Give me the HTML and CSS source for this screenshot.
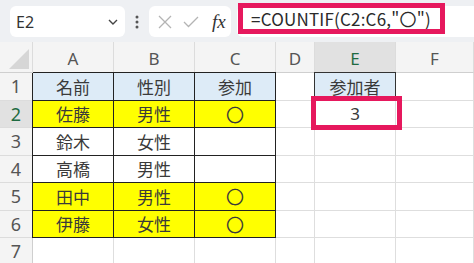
FILE: index.html
```html
<!DOCTYPE html>
<html lang="ja">
<head>
<meta charset="utf-8">
<link rel="stylesheet" href="styles.css">
</head>
<body>
<div class="topbar">
  <div class="namebox">
    <span class="name">E2</span>
    <svg class="chev" width="10" height="6" viewBox="0 0 10 6"><path d="M1 1l4 4 4-4" fill="none" stroke="#444" stroke-width="1.4"/></svg>
  </div>
  <svg class="dots" width="4" height="14" viewBox="0 0 4 14"><circle cx="2" cy="2" r="1.5" fill="#555"/><circle cx="2" cy="7" r="1.5" fill="#555"/><circle cx="2" cy="12" r="1.5" fill="#555"/></svg>
  <div class="fxbox">
    <svg width="14" height="14" viewBox="0 0 14 14"><path d="M1 1l12 12M13 1L1 13" stroke="#b4b4b4" stroke-width="1.3" fill="none"/></svg>
    <svg width="16" height="12" viewBox="0 0 16 12"><path d="M1 6l4.5 4.5L15 1" stroke="#b4b4b4" stroke-width="1.3" fill="none"/></svg>
    <span class="fx">fx</span>
  </div>
  <div class="formula">=COUNTIF(C2:C6,"〇")</div>
  <div class="mark mark-formula"></div>
</div>
<div class="sheet">
  <div class="ch corner"><span class="tri"></span></div>
  <div class="ch">A</div>
  <div class="ch">B</div>
  <div class="ch">C</div>
  <div class="ch">D</div>
  <div class="ch sel">E</div>
  <div class="ch">F</div>

  <div class="rh">1</div>
  <div class="c t hd l top">名前</div>
  <div class="c t hd top">性別</div>
  <div class="c t hd top">参加</div>
  <div class="c"></div>
  <div class="c e1">参加者</div>
  <div class="c"></div>

  <div class="rh sel">2</div>
  <div class="c t y l">佐藤</div>
  <div class="c t y">男性</div>
  <div class="c t y circ">〇</div>
  <div class="c"></div>
  <div class="c num">3</div>
  <div class="c"></div>

  <div class="rh">3</div>
  <div class="c t l">鈴木</div>
  <div class="c t">女性</div>
  <div class="c t"></div>
  <div class="c"></div>
  <div class="c"></div>
  <div class="c"></div>

  <div class="rh">4</div>
  <div class="c t l">高橋</div>
  <div class="c t">男性</div>
  <div class="c t"></div>
  <div class="c"></div>
  <div class="c"></div>
  <div class="c"></div>

  <div class="rh">5</div>
  <div class="c t y l">田中</div>
  <div class="c t y">男性</div>
  <div class="c t y circ">〇</div>
  <div class="c"></div>
  <div class="c"></div>
  <div class="c"></div>

  <div class="rh">6</div>
  <div class="c t y l">伊藤</div>
  <div class="c t y">女性</div>
  <div class="c t y circ">〇</div>
  <div class="c"></div>
  <div class="c"></div>
  <div class="c"></div>

  <div class="rh">7</div>
  <div class="c"></div>
  <div class="c"></div>
  <div class="c"></div>
  <div class="c"></div>
  <div class="c"></div>
  <div class="c"></div>

  <div class="mark mark-cell"></div>
</div>
</body>
</html>
```

FILE: styles.css
```css
html, body {
  margin: 0;
  padding: 0;
  background: #fff;
  overflow: hidden;
}
body {
  width: 474px;
  height: 263px;
  font-family: "Noto Sans CJK JP", "Noto Sans", sans-serif;
  color: #333;
}
.topbar {
  position: relative;
  height: 42px;
  background: #eef0f3;
  display: flex;
  align-items: flex-start;
  padding-top: 6px;
  box-sizing: border-box;
}
.namebox {
  margin-left: 10px;
  width: 115px;
  height: 31px;
  background: #fff;
  border-radius: 6px;
  display: flex;
  align-items: center;
  justify-content: space-between;
  padding: 0 7px 0 6px;
  box-sizing: border-box;
}
.name {
  font-size: 16px;
  color: #333;
  font-family: "Noto Sans", sans-serif;
}
.dots {
  margin: 9px 0 0 10px;
}
.fxbox {
  margin-left: 10px;
  width: 82px;
  height: 31px;
  background: #fff;
  border-radius: 6px;
  display: flex;
  align-items: center;
  gap: 11px;
  padding-left: 9px;
  box-sizing: border-box;
}
.fx {
  font-family: "Liberation Serif", "DejaVu Serif", serif;
  font-style: italic;
  font-size: 19px;
  color: #333;
  letter-spacing: 0;
  margin-left: 2px;
}
.formula {
  flex: 1;
  margin-left: 6px;
  height: 31px;
  background: #fff;
  border-radius: 6px 0 0 6px;
  font-size: 17px;
  line-height: 26px;
  padding-left: 14px;
  color: #2a2a2a;
  white-space: nowrap;
  letter-spacing: 0.2px;
}
.mark {
  position: absolute;
  border: 5px solid #e6185d;
  box-sizing: border-box;
  pointer-events: none;
}
.mark-formula {
  left: 238px;
  top: 3px;
  width: 207px;
  height: 31px;
}
.sheet {
  position: relative;
  display: grid;
  grid-template-columns: 33px 81px 81px 81px 39px 81px 78px;
  grid-template-rows: 31px repeat(7, 27.5px);
}
.ch {
  background: #f4f4f4;
  border-right: 1px solid #dcdcdc;
  border-bottom: 1px solid #cfcfcf;
  display: flex;
  align-items: center;
  justify-content: center;
  font-size: 17px;
  color: #555;
  font-family: "Noto Sans", sans-serif;
  padding-top: 2px;
  box-sizing: border-box;
}
.ch.sel {
  background: #e1e1e1;
  color: #1e6b41;
  border-bottom: 1px solid #1e6b41;
}
.corner {
  position: relative;
}
.tri {
  position: absolute;
  right: 3px;
  bottom: 3px;
  width: 0;
  height: 0;
  border-left: 20px solid transparent;
  border-bottom: 20px solid #d6d6d6;
}
.rh {
  background: #f4f4f4;
  border-right: 1px solid #cfcfcf;
  border-bottom: 1px solid #dcdcdc;
  display: flex;
  align-items: center;
  justify-content: center;
  font-size: 18px;
  color: #555;
  font-family: "Noto Sans", sans-serif;
  box-sizing: border-box;
}
.rh.sel {
  background: #e1e1e1;
  color: #1e6b41;
  border-right: 1px solid #1e6b41;
}
.c {
  border-right: 1px solid #dedede;
  border-bottom: 1px solid #dedede;
  display: flex;
  align-items: center;
  justify-content: center;
  font-size: 17px;
  color: #3a3a3a;
  box-sizing: border-box;
}
.c.t {
  border-right-color: #222;
  border-bottom-color: #222;
}
.c.l {
  box-shadow: -1px 0 0 #222;
}
.c.top {
  box-shadow: 0 -1px 0 #222;
}
.c.l.top {
  box-shadow: -1px 0 0 #222, 0 -1px 0 #222, -1px -1px 0 #222;
}
.c.hd {
  background: #ddebf7;
}
.c.y {
  background: #ffff00;
}
.c.circ {
  font-size: 18px;
}
.c.e1 {
  background: #ddebf7;
  border-right-color: #333;
  border-bottom-color: #333;
  box-shadow: -1px 0 0 #333, 0 -1px 0 #333, -1px -1px 0 #333;
}
.c.num {
  font-family: "Noto Sans", sans-serif;
  font-size: 17px;
}
.mark-cell {
  left: 311px;
  top: 54px;
  width: 91px;
  height: 34px;
}
```
